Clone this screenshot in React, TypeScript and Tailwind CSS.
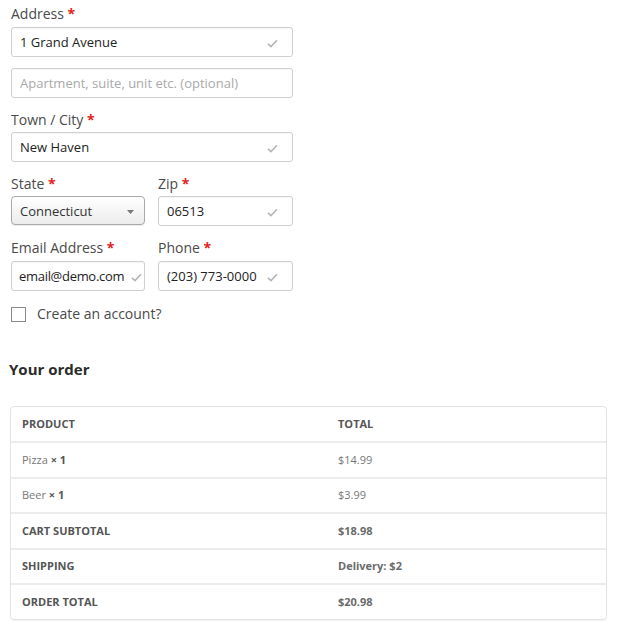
import React from 'react';

const Check = () => (
  <svg width="11" height="9" viewBox="0 0 11 9" className="shrink-0">
    <path d="M1 4.8 L4 7.6 L10 1.2" fill="none" stroke="#b5b5b5" strokeWidth="1.6" />
  </svg>
);

const Label = ({ children }: { children: React.ReactNode }) => (
  <div className="h-5 leading-5 text-[14px] text-[#4a4a4a]">
    {children} <span className="text-[#e2231a] font-bold">*</span>
  </div>
);

const Field = ({ value, placeholder, tight }: { value?: string; placeholder?: string; tight?: boolean }) => (
  <div className={`h-[30px] border border-[#cfcfcf] rounded-[3px] bg-white flex items-center pt-[2px] ${tight ? 'pl-[7px] pr-[2px]' : 'pl-2 pr-[14px]'} shadow-[inset_0_1px_1px_rgba(0,0,0,0.04)]`}>
    {value ? (
      <span className={`flex-1 text-[13px] text-[#222] whitespace-nowrap ${tight ? 'tracking-[-0.3px]' : ''}`}>{value}</span>
    ) : (
      <span className="flex-1 text-[13px] text-[#a9a9a9] whitespace-nowrap">{placeholder}</span>
    )}
    {value && <Check />}
  </div>
);

const rows = [
  { a: 'Pizza', q: '× 1', b: '$14.99', bold: false },
  { a: 'Beer', q: '× 1', b: '$3.99', bold: false },
  { a: 'CART SUBTOTAL', b: '$18.98', bold: true },
  { a: 'SHIPPING', b: 'Delivery: $2', bold: true },
  { a: 'ORDER TOTAL', b: '$20.98', bold: true },
];

export default function App() {
  return (
    <div className="w-[621px] h-[639px] bg-white font-['Open_Sans',sans-serif] overflow-hidden">
      <div className="pl-[11px] pt-1 w-[293px]">
        <Label>Address</Label>
        <div className="mt-[3px]"><Field value="1 Grand Avenue" /></div>
        <div className="mt-[11px]"><Field placeholder="Apartment, suite, unit etc. (optional)" /></div>

        <div className="mt-3"><Label>Town / City</Label></div>
        <div className="mt-[2px]"><Field value="New Haven" /></div>

        <div className="mt-3 grid grid-cols-[134px_135px] gap-x-[13px]">
          <div>
            <Label>State</Label>
            <div className="mt-[2px] h-[29px] border border-[#a9a9a9] rounded-[4px] bg-gradient-to-b from-white to-[#ececec] flex items-center pt-[2px] pl-2 pr-[10px] shadow-[0_1px_1px_rgba(0,0,0,0.08)]">
              <span className="flex-1 text-[13px] text-[#333]">Connecticut</span>
              <svg width="7" height="4" viewBox="0 0 7 4"><path d="M0 0 L7 0 L3.5 4 Z" fill="#777" /></svg>
            </div>
          </div>
          <div>
            <Label>Zip</Label>
            <div className="mt-[2px]"><Field value="06513" /></div>
          </div>
        </div>

        <div className="mt-3 grid grid-cols-[134px_135px] gap-x-[13px]">
          <div>
            <Label>Email Address</Label>
            <div className="mt-[3px]"><Field value="email@demo.com" tight /></div>
          </div>
          <div>
            <Label>Phone</Label>
            <div className="mt-[3px]"><Field value="(203) 773-0000" /></div>
          </div>
        </div>

        <div className="mt-[13px] flex items-center gap-[11px]">
          <div className="w-[15px] h-[15px] border border-[#8a8a8a] bg-white" />
          <span className="text-[14px] text-[#4a4a4a] leading-5">Create an account?</span>
        </div>
      </div>

      <div className="pl-[9px] mt-[35px] text-[15px] font-bold text-[#2b2b2b] leading-5">Your order</div>

      <div className="ml-[10px] mt-[27px] w-[597px] border border-[#e3e3e3] rounded-[4px] shadow-[0_1px_1px_rgba(0,0,0,0.05)]">
        <div className="grid grid-cols-[316px_1fr] h-[34px] items-center text-[11px] font-bold text-[#555]">
          <div className="pl-[11px]">PRODUCT</div>
          <div className="pl-[11px]">TOTAL</div>
        </div>
        {rows.map((r) => (
          <div key={r.a} className="grid grid-cols-[316px_1fr] h-[35.5px] items-center border-t-2 border-[#ececec] text-[11px] text-[#777]">
            <div className={`pl-[11px] ${r.bold ? 'font-bold text-[#555]' : ''}`}>
              {r.a}{r.q && <span className="font-bold text-[#555]"> {r.q}</span>}
            </div>
            <div className={`pl-[11px] ${r.bold ? 'font-bold text-[#6b6b6b]' : ''}`}>{r.b}</div>
          </div>
        ))}
      </div>
    </div>
  );
}
